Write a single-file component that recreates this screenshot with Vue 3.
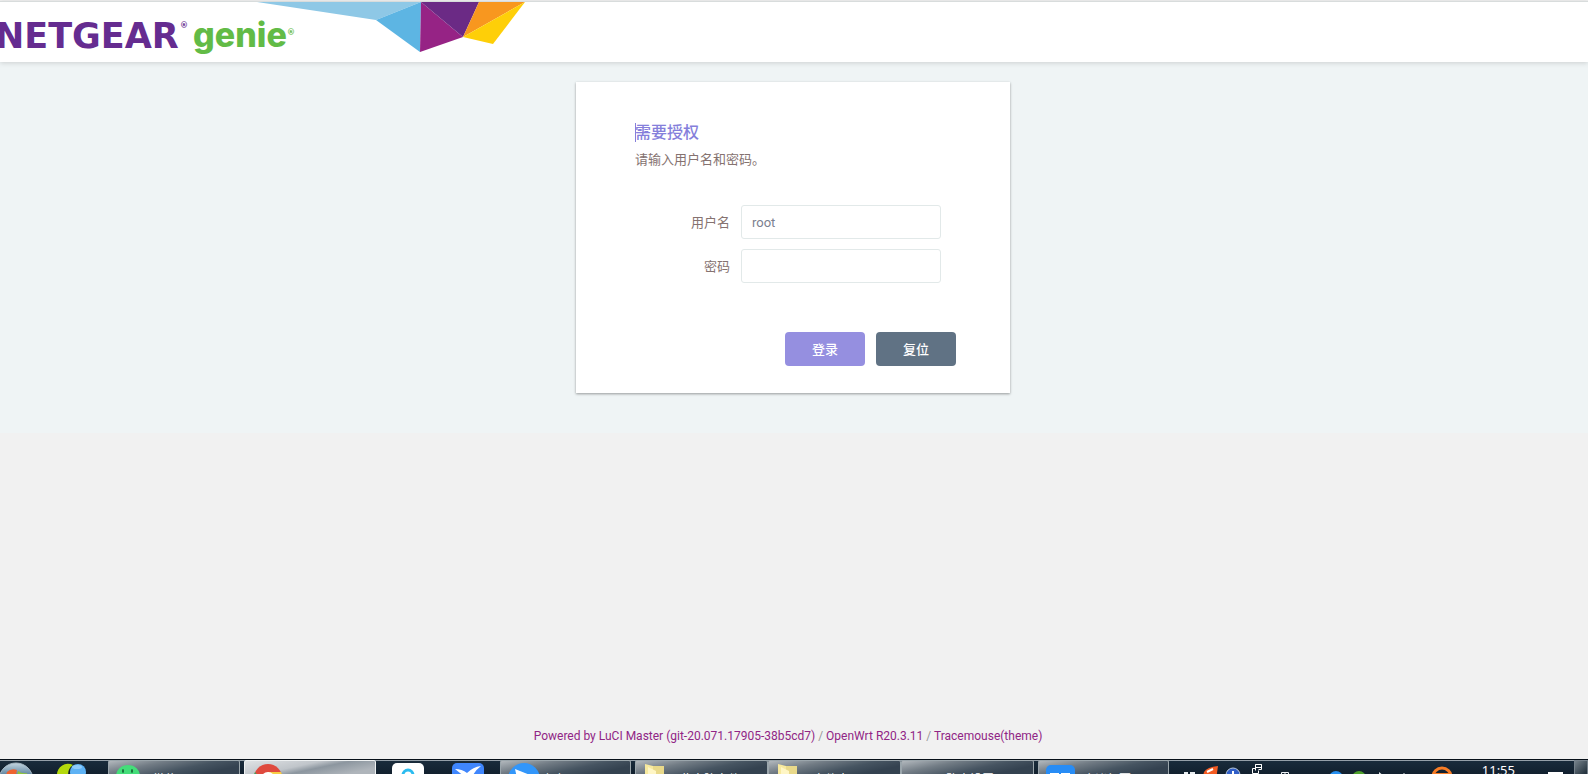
<template>
  <div class="page">
    <header class="header">
      <svg class="brand" width="530" height="60" viewBox="0 0 530 60" role="img" aria-label="NETGEAR genie">
        <polygon points="257,0 421,0 376,18" fill="#8ec8e6" />
        <polygon points="421,0 376,18 420,50" fill="#5db5e3" />
        <polygon points="421,0 420,50 463,35" fill="#962385" />
        <polygon points="421,0 479,0 463,35" fill="#6b2a85" />
        <polygon points="479,0 525,0 463,35" fill="#f8971f" />
        <polygon points="525,0 463,35 493,42" fill="#fecf08" />
        <text class="brand-netgear" x="-5" y="46">NETGEAR</text>
        <text class="brand-mark brand-mark--purple" x="180" y="26">®</text>
        <text class="brand-genie" x="193" y="45">genie</text>
        <text class="brand-mark brand-mark--green" x="287" y="33">®</text>
      </svg>
    </header>

    <main class="content">
      <form class="card" @submit.prevent="login" @reset.prevent="reset">
        <h2 class="card-title">需要授权</h2>
        <p class="card-desc">请输入用户名和密码。</p>
        <div class="fields">
          <label for="username">用户名</label>
          <input id="username" v-model="username" type="text" />
          <label for="password">密码</label>
          <input id="password" v-model="password" type="password" />
        </div>
        <div class="actions">
          <button class="btn btn--apply" type="submit">登录</button>
          <button class="btn btn--reset" type="reset">复位</button>
        </div>
      </form>
    </main>

    <footer class="footer">
      <a href="#">Powered by LuCI Master (git-20.071.17905-38b5cd7)</a>
      / <a href="#">OpenWrt R20.3.11</a>
      / <a href="#">Tracemouse(theme)</a>
    </footer>

    <nav class="taskbar" aria-label="任务栏">
      <button class="start" type="button" aria-label="开始">
        <svg width="36" height="36" viewBox="0 0 36 36">
          <defs>
            <linearGradient id="orb" x1="0" y1="0" x2="0" y2="1">
              <stop offset="0" stop-color="#c3d5e0" />
              <stop offset="0.35" stop-color="#5e84a0" />
              <stop offset="1" stop-color="#164667" />
            </linearGradient>
          </defs>
          <circle cx="16" cy="18" r="17" fill="url(#orb)" stroke="#a6b8c4" />
          <path d="M7 10q4-4 10-2l-2 9q-4-2-10 0z" fill="#ee6330" />
          <path d="M18 9q4 3 9 2l-3 9q-4 1-8-1z" fill="#8fc43c" />
        </svg>
      </button>
      <button class="quick quick--orbs" type="button" aria-label="浏览器">
        <svg width="32" height="32" viewBox="0 0 32 32">
          <path d="M1 12a11 11 0 0 1 16-10q-7 5-4 14z" fill="#b4d90c" />
          <circle cx="22" cy="9" r="8" fill="#5eb2f4" />
          <ellipse cx="21" cy="4" rx="5" ry="2" fill="#8fcbfa" />
        </svg>
      </button>

      <button class="task" type="button">
        <svg width="32" height="32" viewBox="0 0 32 32">
          <ellipse cx="12" cy="13" rx="12" ry="11" fill="#44dd79" />
          <ellipse cx="7" cy="8" rx="1" ry="2" fill="#176e39" />
          <ellipse cx="16" cy="8" rx="1" ry="2" fill="#176e39" />
        </svg>
        <span>微信</span>
      </button>
      <button class="task task--active" type="button" aria-label="Chrome">
        <svg width="32" height="32" viewBox="0 0 32 32">
          <circle cx="16" cy="15" r="14" fill="#df4a3e" />
          <path d="M16 9h13a14 14 0 0 1-13 20z" fill="#f7ce46" />
          <path d="M3 9l9 12 4 8A14 14 0 0 1 3 9z" fill="#3ca55c" />
          <circle cx="16" cy="16" r="7" fill="#fff" />
          <circle cx="16" cy="16" r="5" fill="#4a8cf0" />
        </svg>
      </button>
      <button class="quick quick--cloud" type="button" aria-label="云盘">
        <svg width="32" height="32" viewBox="0 0 32 32">
          <rect width="32" height="32" rx="5" fill="#fff" />
          <circle cx="16" cy="12" r="5" fill="none" stroke="#2cbcf0" stroke-width="3" />
        </svg>
      </button>
      <button class="quick quick--bird" type="button" aria-label="邮箱">
        <svg width="32" height="32" viewBox="0 0 32 32">
          <rect width="32" height="32" rx="5" fill="#3f86fd" />
          <path d="M3 6q7 0 12 4Q21 4 29 3 21 9 20 16l-5 8-2-10z" fill="#fff" />
        </svg>
      </button>
      <button class="task task--short" type="button">
        <svg width="32" height="32" viewBox="0 0 32 32">
          <circle cx="16" cy="16" r="16" fill="#3296fa" />
          <path d="M7 6l20 8-6 12-4-8-8-3z" fill="#fff" />
        </svg>
        <span>钉钉</span>
      </button>
      <div class="task-group">
        <button v-for="item in windows" :key="item.label" class="task" type="button">
          <svg width="32" height="32" viewBox="0 0 32 32">
            <template v-if="item.folder">
              <path d="M2 1l8 2v27l-8-3z" fill="#f7e99e" />
              <path d="M10 3h11v25H10z" fill="#e9d98a" />
              <path d="M5 4l8 4v23l-8-4z" fill="#fff6c5" />
            </template>
          </svg>
          <span>{{ item.label }}</span>
        </button>
      </div>
      <button class="task task--short" type="button">
        <svg width="32" height="32" viewBox="0 0 32 32">
          <rect x="0" y="2" width="29" height="29" rx="5" fill="#278cf5" />
          <path d="M4 11h9M15 11h9" stroke="#fff" stroke-width="2" />
        </svg>
        <span>会议纪要</span>
      </button>

      <div class="tray">
        <svg width="290" height="36" viewBox="0 0 290 36" aria-hidden="true">
          <path d="M2 13h4M8 13h5M9 13v8" stroke="#e8edf0" stroke-width="2" />
          <path d="M22 12q3-5 14-6l-2 14H20z" fill="#f45b22" />
          <path d="M25 12l6-3" stroke="#fff" stroke-width="2" />
          <circle cx="51" cy="15" r="7" fill="#315fc7" stroke="#b9c8d8" />
          <path d="M51 11v7" stroke="#fff" stroke-width="2" />
          <path d="M73.500 10.500v-3h6v-3M73.500 7.500V4.500M73.500 8.500h-3v5h6v-3M73.500 8.500v-4h6v5h-3" fill="none" stroke="#fff" />
          <path d="M99.500 12.500h7v8h-7zM103 12v7" fill="none" stroke="#edf1f4" />
          <circle cx="154" cy="18" r="7" fill="#268ff0" />
          <circle cx="177" cy="18" r="7" fill="#4ea02b" />
          <path d="M197 12l5 4-5 5z" fill="#e9edef" />
          <path d="M222 13v6" stroke="#e9edef" />
          <circle cx="260" cy="17" r="9" fill="none" stroke="#f77c25" stroke-width="3" />
          <path d="M253 14h14" stroke="#f77c25" stroke-width="2" />
        </svg>
        <time class="clock">11:55</time>
        <span class="notice"></span>
        <button class="desktop" type="button" aria-label="显示桌面"></button>
      </div>
    </nav>
  </div>
</template>

<script setup>
import { ref } from 'vue'

const username = ref('root')
const password = ref('')

const windows = [
  { label: '此电脑文件', folder: true },
  { label: '文件夹', folder: true },
  { label: '路由设置', folder: false },
]

function login() {
  password.value = ''
}

function reset() {
  username.value = 'root'
  password.value = ''
}
</script>

<style>
body {
  margin: 0;
}
</style>

<style scoped>
.page {
  display: flex;
  flex-direction: column;
  min-height: 100vh;
  padding-top: 1px;
  box-sizing: border-box;
  background: #f1f1f1;
  color: #857270;
  font-family: Roboto, 'Noto Sans CJK SC', sans-serif;
  font-size: 13px;
}

.header {
  position: relative;
  border-top: 1px solid #d8dcdc;
  background: #fff;
  box-shadow: 0 1px 5px rgba(0, 0, 0, 0.15);
}

.brand {
  display: block;
}

.brand-netgear {
  fill: #652c90;
  font: 700 35px 'DejaVu Sans', sans-serif;
}

.brand-genie {
  fill: #62bb46;
  font: 800 34px Inter, sans-serif;
}

.brand-mark {
  font: 700 8px 'DejaVu Sans', sans-serif;
}

.brand-mark--purple {
  fill: #652c90;
}

.brand-mark--green {
  fill: #62bb46;
}

.content {
  display: flex;
  justify-content: center;
  padding: 20px 22px 40px 20px;
  background: #eff4f5;
}

.card {
  width: 434px;
  padding: 39px 54px 27px 59px;
  box-sizing: border-box;
  background: #fff;
  box-shadow: 0 1px 3px rgba(0, 0, 0, 0.2), 0 1px 2px rgba(0, 0, 0, 0.2);
}

.card-title {
  position: relative;
  margin: 0;
  color: #857fdb;
  font-size: 16px;
  font-weight: 500;
  line-height: 24px;
}

.card-title::before {
  content: '';
  position: absolute;
  top: 2px;
  left: 0;
  width: 1px;
  height: 19px;
  background: #857fdb;
}

.card-desc {
  margin: 5px 0 35px;
  line-height: 20px;
}

.fields {
  display: grid;
  grid-template-columns: 95px 200px;
  align-items: center;
  gap: 10px 11px;
}

.fields label {
  padding-top: 2px;
  text-align: right;
  line-height: 20px;
}

.fields input {
  width: 100%;
  height: 34px;
  padding: 0 10px;
  box-sizing: border-box;
  border: 1px solid #e2e9e9;
  border-radius: 3px;
  outline: none;
  background: #fff;
  color: #7b8190;
  font: inherit;
}

.actions {
  display: flex;
  justify-content: flex-end;
  gap: 11px;
  margin-top: 49px;
}

.btn {
  width: 80px;
  height: 34px;
  padding: 0 0 2px;
  border: none;
  border-radius: 4px;
  color: #fff;
  font: inherit;
  font-weight: 500;
  cursor: pointer;
}

.btn--apply {
  background: #958fe0;
}

.btn--reset {
  background: #607284;
}

.footer {
  margin-top: auto;
  padding: 0 12px 14px 0;
  color: #999;
  font-size: 12px;
  line-height: 18px;
  text-align: center;
}

.footer a {
  color: #902585;
  text-decoration: none;
}

/* only the upper edge of the bar is on screen */
.taskbar {
  display: flex;
  align-items: flex-start;
  height: 15px;
  box-sizing: border-box;
  overflow: hidden;
  border-top: 1px solid #071018;
  background: linear-gradient(#95a0a9 0 1px, #192b3b 1px, #111f2d 15px);
}

.taskbar button {
  flex: none;
  padding: 0;
  border: none;
  background: none;
  color: #fff;
  font: 12px Roboto, 'Noto Sans CJK SC', sans-serif;
}

.taskbar svg {
  display: block;
  flex: none;
}

.start {
  width: 56px;
  margin-top: 2px;
}

.quick {
  width: 32px;
  margin-top: 3px;
}

.quick--orbs {
  margin-right: 20px;
}

.quick--cloud {
  margin-left: 12px;
}

.quick--bird {
  margin-left: 28px;
  margin-right: 16px;
}

.taskbar .task {
  display: flex;
  align-items: flex-start;
  gap: 5px;
  width: 132px;
  height: 40px;
  margin-right: 4px;
  padding: 2px 7px;
  box-sizing: border-box;
  border: 1px solid #9ba6ac;
  border-radius: 2px;
  background: linear-gradient(168deg, #b2b8bd 0, #727c85 12px, #465461 23px, #344250 32px);
}

.taskbar .task span {
  padding-top: 8px;
  line-height: 18px;
}

.taskbar .task--short {
  width: 131px;
}

.taskbar .task--active {
  border-color: #eef1f2;
  background: linear-gradient(168deg, #dfe2e4 0, #c0c5ca 16px, #8c969f 22px, #afb5bb 34px);
}

.task-group {
  display: flex;
  margin-right: 4px;
}

.taskbar .task-group .task {
  width: 133px;
  margin-right: 0;
}

.tray {
  display: flex;
  align-items: flex-start;
  margin-left: auto;
}

.clock {
  margin-left: 10px;
  color: #fff;
  font: 13px/20px 'Noto Sans', sans-serif;
}

.notice {
  width: 15px;
  height: 10px;
  margin: 12px 11px 0 33px;
  background: #fff;
}

.taskbar .desktop {
  width: 14px;
  height: 40px;
  border: 1px solid #75818b;
  background: linear-gradient(135deg, #75818a, #26343f 16px);
}
</style>
